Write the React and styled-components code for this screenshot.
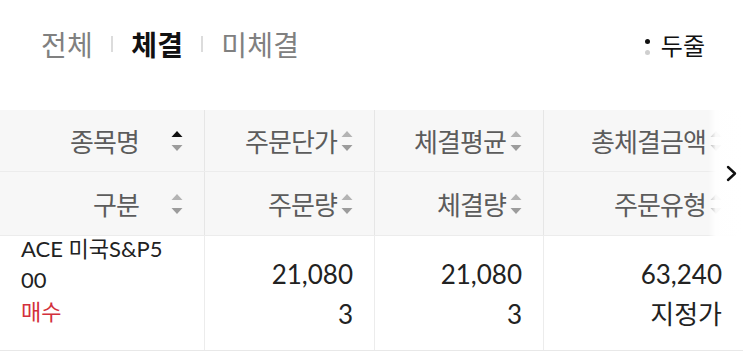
import styled, { createGlobalStyle } from "styled-components";

const GlobalStyle = createGlobalStyle`
  * { box-sizing: border-box; }
  body {
    margin: 0;
    background: #fff;
    font-family: Lato, "Noto Sans CJK KR", sans-serif;
  }
`;

const COLS = "205px 170px 169px 200px";

const headRows = [
  [
    { label: "종목명", active: true, wide: true },
    { label: "주문단가" },
    { label: "체결평균" },
    { label: "총체결금액" },
  ],
  [
    { label: "구분", wide: true },
    { label: "주문량" },
    { label: "체결량" },
    { label: "주문유형" },
  ],
];

const orders = [
  {
    name: "ACE 미국S&P500",
    side: "매수",
    cols: [
      ["21,080", "3"],
      ["21,080", "3"],
      ["63,240", "지정가"],
    ],
  },
];

export default function App() {
  return (
    <Page>
      <GlobalStyle />
      <TopBar>
        <Tabs>
          <Tab>전체</Tab>
          <Sep />
          <Tab $active>체결</Tab>
          <Sep />
          <Tab>미체결</Tab>
        </Tabs>
        <LineToggle>
          <Dots>
            <Dot />
            <Dot $light />
          </Dots>
          두줄
        </LineToggle>
      </TopBar>

      <TableWrap>
        {headRows.map((row, i) => (
          <HeadRow key={i} $first={i === 0}>
            {row.map((c) => (
              <HeadCell key={c.label} $wide={c.wide}>
                <span>{c.label}</span>
                <SortIcon active={c.active} />
              </HeadCell>
            ))}
          </HeadRow>
        ))}

        {orders.map((o) => (
          <DataRow key={o.name}>
            <NameCell>
              <Name>{o.name}</Name>
              <Side>{o.side}</Side>
            </NameCell>
            {o.cols.map((vals, j) => (
              <NumCell key={j}>
                {vals.map((v, k) => (
                  <div key={k}>{v}</div>
                ))}
              </NumCell>
            ))}
          </DataRow>
        ))}

        <Fade />
        <Chevron>
          <svg width="11" height="17" viewBox="0 0 11 17">
            <path d="M2 2 L9 8.5 L2 15" fill="none" stroke="#111" strokeWidth="2.4" strokeLinecap="round" strokeLinejoin="round" />
          </svg>
        </Chevron>
      </TableWrap>
    </Page>
  );
}

function SortIcon({ active }) {
  return (
    <svg width="12" height="22" viewBox="0 0 12 22">
      <path d="M6 1 L11.5 7 H0.5 Z" fill={active ? "#111" : "#b4b4b4"} />
      <path d="M6 21 L11.5 15 H0.5 Z" fill="#9c9c9c" />
    </svg>
  );
}

const Page = styled.div`
  width: 743px;
  height: 354px;
  overflow: hidden;
  background: #fff;
`;

const TopBar = styled.div`
  display: flex;
  align-items: center;
  justify-content: space-between;
  height: 88px;
  padding: 0 38px 0 41px;
  margin-bottom: 22px;
`;

const Tabs = styled.div`
  display: flex;
  align-items: center;
  gap: 18px;
`;

const Tab = styled.span`
  font-family: "Noto Sans CJK KR", sans-serif;
  font-size: 28px;
  font-weight: ${({ $active }) => ($active ? 700 : 400)};
  color: ${({ $active }) => ($active ? "#111" : "#808080")};
  letter-spacing: 0.3px;
`;

const Sep = styled.span`
  width: 2px;
  height: 16px;
  background: #dcdcdc;
`;

const LineToggle = styled.div`
  display: flex;
  align-items: center;
  gap: 11px;
  font-family: "Noto Sans CJK KR", sans-serif;
  font-size: 24px;
  color: #111;
`;

const Dots = styled.div`
  display: flex;
  flex-direction: column;
  gap: 6px;
  margin-top: 5px;
`;

const Dot = styled.span`
  width: 5px;
  height: 5px;
  border-radius: 50%;
  background: ${({ $light }) => ($light ? "#cfcfcf" : "#111")};
`;

const TableWrap = styled.div`
  position: relative;
  width: 760px;
`;

const HeadRow = styled.div`
  display: grid;
  grid-template-columns: ${COLS};
  height: ${({ $first }) => ($first ? "62px" : "64px")};
  background: #f7f7f7;
  border-bottom: 1px solid #ececec;
`;

const HeadCell = styled.div`
  display: flex;
  align-items: center;
  justify-content: flex-end;
  gap: ${({ $wide }) => ($wide ? "32px" : "4px")};
  padding-right: 21px;
  border-right: 1px solid #e6e6e6;
  font-family: "Noto Sans CJK KR", sans-serif;
  font-size: 26px;
  color: #5c5c5c;
  letter-spacing: -0.9px;
  white-space: nowrap;

  svg {
    flex: none;
  }
`;

const DataRow = styled.div`
  display: grid;
  grid-template-columns: ${COLS};
  height: 115px;
  border-bottom: 1px solid #e8e8e8;
`;

const Cell = styled.div`
  border-right: 1px solid #ececec;
  color: #222;
`;

const NameCell = styled(Cell)`
  padding: 0 0 0 21px;
  font-size: 22px;
  line-height: 31px;
`;

const Name = styled.div`
  width: 152px;
  margin-top: -3px;
  word-break: break-all;
`;

const Side = styled.div`
  font-family: "Noto Sans CJK KR", sans-serif;
  color: #d3303c;
  font-size: 22px;
`;

const NumCell = styled(Cell)`
  display: flex;
  flex-direction: column;
  align-items: flex-end;
  padding: 18px 21px 0 0;
  font-size: 26px;
  line-height: 40px;
`;

const Fade = styled.div`
  position: absolute;
  top: 0;
  right: 17px;
  width: 35px;
  height: 126px;
  background: linear-gradient(
    to right,
    rgba(255, 255, 255, 0) 0%,
    rgba(255, 255, 255, 0.93) 22%,
    rgba(255, 255, 255, 1) 100%
  );
  pointer-events: none;
`;

const Chevron = styled.div`
  position: absolute;
  top: 55px;
  left: 726px;
  display: flex;
`;
